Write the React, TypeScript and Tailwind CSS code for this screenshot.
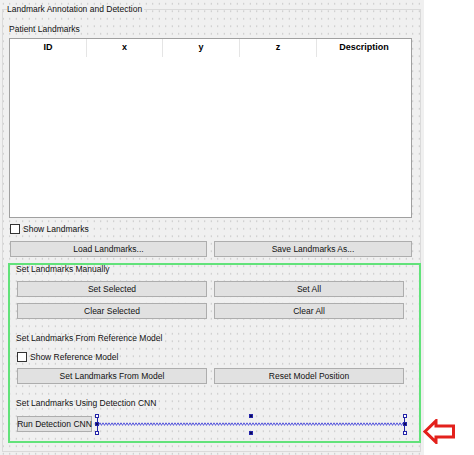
import type { ReactNode } from 'react'

const font = { fontFamily: '"Liberation Sans", Arial, sans-serif' }

function cn(...c: (string | false | undefined)[]) {
  return c.filter(Boolean).join(' ')
}

function QButton({ children, className = '' }: { children: ReactNode; className?: string }) {
  return (
    <div
      className={`h-[16px] flex items-center justify-center whitespace-nowrap bg-[#e1e1e1] border border-[#adadad] text-[8.5px] text-[#111] leading-none ${className}`}
    >
      {children}
    </div>
  )
}

function QCheck({ label }: { label: string }) {
  return (
    <div className="flex items-center gap-[3px] h-[12px] text-[8.5px] text-[#111]">
      <span className="w-[10px] h-[10px] bg-white border border-[#333]" />
      <span className="leading-none">{label}</span>
    </div>
  )
}

function Handle({ filled, className }: { filled?: boolean; className: string }) {
  return (
    <span
      className={cn(
        'absolute w-[4px] h-[4px] border border-[#2323a8]',
        filled ? 'bg-[#0b0b5c]' : 'bg-white',
        className,
      )}
    />
  )
}

// Qt Designer horizontal spacer: hatched blue line with selection handles
function Spacer() {
  return (
    <div className="relative w-[308px] h-[16px] ml-[5px]">
      <svg className="absolute left-0 top-[6px]" width="308" height="4">
        <defs>
          <pattern id="zz" width="3" height="4" patternUnits="userSpaceOnUse">
            <path d="M0 0.6 L1.5 3.4 L3 0.6" fill="none" stroke="#4b4bdc" strokeWidth="0.9" />
          </pattern>
        </defs>
        <rect width="308" height="4" fill="url(#zz)" />
      </svg>
      <span className="absolute left-[0px] top-[-1px] w-px h-[18px] bg-[#2323a8]" />
      <span className="absolute right-[0px] top-[-1px] w-px h-[18px] bg-[#2323a8]" />
      <Handle className="left-[-2px] top-[-2px]" />
      <Handle filled className="left-[-2px] top-[6px]" />
      <Handle className="left-[-2px] top-[15px]" />
      <Handle className="right-[-2px] top-[-2px]" />
      <Handle filled className="right-[-2px] top-[6px]" />
      <Handle className="right-[-2px] top-[15px]" />
      <Handle filled className="left-[152px] top-[-2px]" />
      <Handle filled className="left-[152px] top-[15px]" />
    </div>
  )
}

const cols = [
  { label: 'ID', w: 'w-[77px]' },
  { label: 'x', w: 'w-[76px]' },
  { label: 'y', w: 'w-[77px]' },
  { label: 'z', w: 'w-[77px]' },
  { label: 'Description', w: 'flex-1' },
]

export default function App() {
  return (
    <div className="relative w-[474px] h-[455px] bg-white overflow-hidden" style={font}>
      <div className="relative w-[424px] h-[455px] pt-[3px] bg-[#f0f0f0] bg-[radial-gradient(circle,#c6c6c6_0.55px,transparent_0.9px)] bg-[length:6.5px_7.5px]">
        {/* group frame */}
        <div className="absolute left-[2px] right-[3px] top-[9px] bottom-[3px] border border-[#dadada] pointer-events-none" />

        <div className="relative flex items-center h-[12px] pl-[7px] text-[8.5px] text-[#111]">
          <span className="bg-[#f0f0f0] pr-[2px] leading-none">Landmark Annotation and Detection</span>
        </div>

        <div className="relative mt-[8px] h-[12px] pl-[9px] flex items-center text-[8.5px] text-[#111]">
          Patient Landmarks
        </div>

        {/* table */}
        <div className="relative mt-[3px] ml-[9px] w-[403px] h-[180px] bg-white border border-[#a0a0a0]">
          <div className="flex h-[18px]">
            {cols.map((c, i) => (
              <div
                key={c.label}
                className={cn(
                  'flex items-center justify-center text-[9px] font-bold text-black',
                  c.w,
                  i < cols.length - 1 && 'border-r border-[#e5e5e5]',
                )}
              >
                {c.label}
              </div>
            ))}
          </div>
        </div>

        <div className="relative mt-[5px] pl-[10px]">
          <QCheck label="Show Landmarks" />
        </div>

        <div className="relative mt-[6px] pl-[10px] flex gap-[7px]">
          <QButton className="w-[197px]">Load Landmarks...</QButton>
          <QButton className="w-[198px]">Save Landmarks As...</QButton>
        </div>

        {/* selected layout */}
        <div className="relative mt-[6px] ml-[8px] w-[413px] h-[180px] border-2 border-[#62e27a]">
          <div className="h-[9px] pl-[6px] flex items-center text-[8.5px] text-[#111] leading-none">
            Set Landmarks Manually
          </div>
          <div className="mt-[7px] pl-[7px] flex gap-[7px]">
            <QButton className="w-[190px]">Set Selected</QButton>
            <QButton className="w-[190px]">Set All</QButton>
          </div>
          <div className="mt-[6px] pl-[7px] flex gap-[7px]">
            <QButton className="w-[190px]">Clear Selected</QButton>
            <QButton className="w-[190px]">Clear All</QButton>
          </div>

          <div className="mt-[14px] h-[10px] pl-[6px] flex items-center text-[8.5px] text-[#111] leading-none">
            Set Landmarks From Reference Model
          </div>
          <div className="mt-[8px] pl-[7px]">
            <QCheck label="Show Reference Model" />
          </div>
          <div className="mt-[5px] pl-[7px] flex gap-[7px]">
            <QButton className="w-[190px]">Set Landmarks From Model</QButton>
            <QButton className="w-[190px]">Reset Model Position</QButton>
          </div>

          <div className="mt-[14px] h-[10px] pl-[6px] flex items-center text-[8.5px] text-[#111] leading-none">
            Set Landmarks Using Detection CNN
          </div>
          <div className="mt-[8px] pl-[7px] flex items-center">
            <QButton className="w-[75px]">Run Detection CNN</QButton>
            <Spacer />
          </div>
        </div>
      </div>

      {/* red annotation arrow */}
      <svg className="absolute left-[423px] top-[419px]" width="33" height="25" viewBox="0 0 33 25">
        <polygon
          points="2,12.5 13,1.8 13,7 30.5,7 30.5,18 13,18 13,23.2"
          fill="white"
          stroke="#e3211c"
          strokeWidth="3"
          strokeLinejoin="miter"
        />
      </svg>
    </div>
  )
}
